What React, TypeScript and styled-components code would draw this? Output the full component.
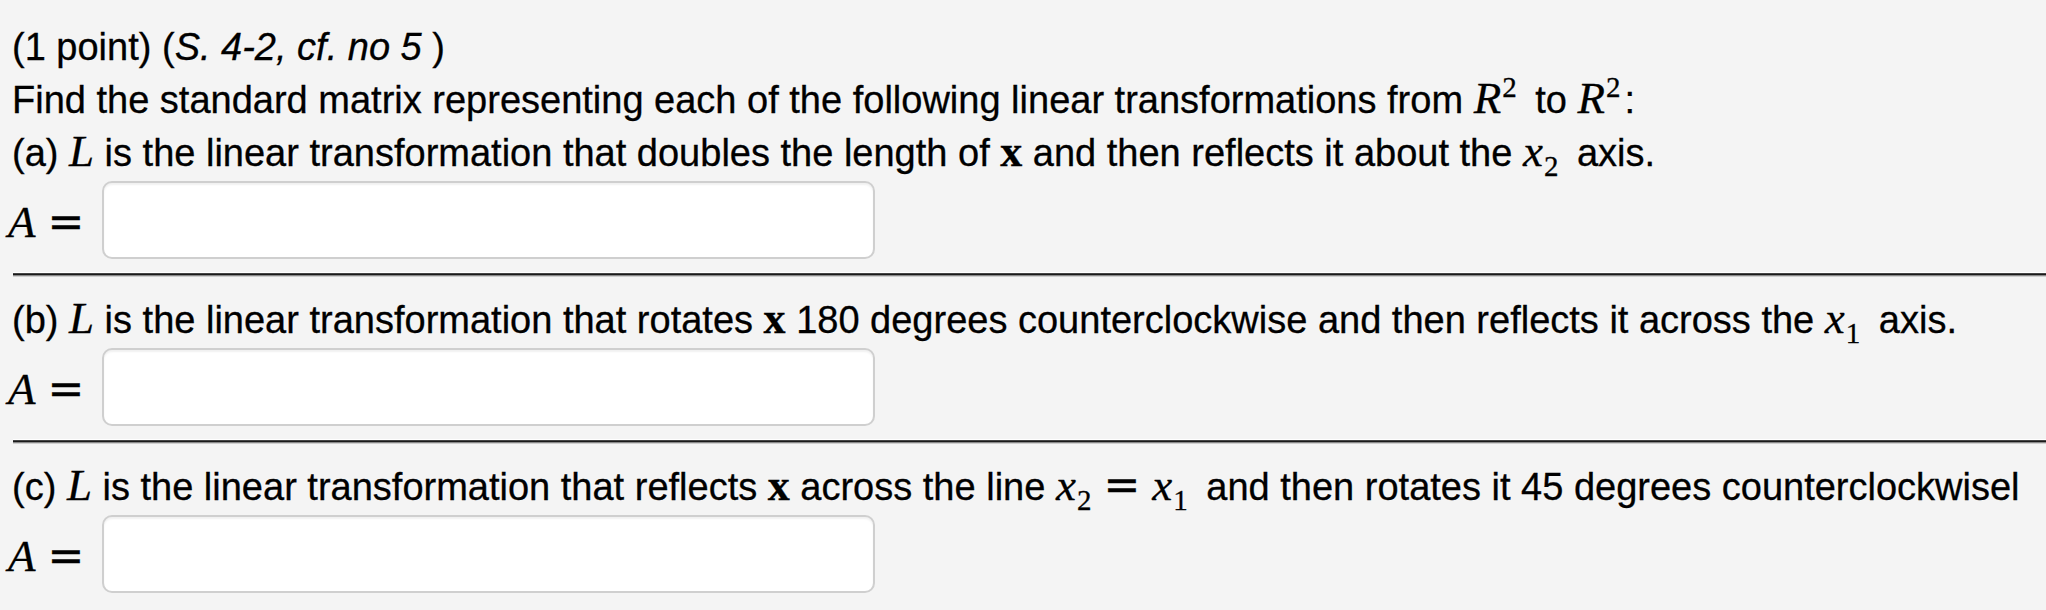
import styled, { createGlobalStyle } from 'styled-components'

const GlobalStyle = createGlobalStyle`
  html, body {
    margin: 0;
    padding: 0;
    background-color: #f4f4f4;
  }
`

const Page = styled.main`
  padding: 21px 0 10px 12px;
  font-family: "Liberation Sans", Arial, Helvetica, sans-serif;
  font-size: 38px;
  line-height: 53px;
  color: #000;
  background-color: #f4f4f4;
  -webkit-text-stroke: 0.3px #000;
`

const Line = styled.p`
  margin: 0;
  white-space: nowrap;
`

const Source = styled.span`
  font-style: italic;
`

const Math = styled.span<{ $trail?: number }>`
  font-family: "Liberation Serif", "Times New Roman", serif;
  font-style: italic;
  font-size: 45px;
  line-height: 1;
  margin-right: ${(p) => p.$trail ?? 0}px;
`

const BoldVec = styled.span`
  font-family: "Liberation Serif", "Times New Roman", serif;
  font-weight: bold;
  font-size: 44px;
  line-height: 1;
`

const Script = styled.span<{ $shift: number }>`
  font-family: "Liberation Serif", "Times New Roman", serif;
  font-style: normal;
  font-size: 29px;
  line-height: 1;
  position: relative;
  top: ${(p) => p.$shift}px;
  margin-left: 1px;
`

const Equals = styled.span`
  font-family: "DejaVu Serif", serif;
  font-style: normal;
  font-size: 44px;
  line-height: 1;
  margin: 0 12px;
`

const AnswerRow = styled.div`
  display: flex;
  align-items: center;
  margin-top: 1px;
`

const Label = styled.label`
  display: flex;
  align-items: center;
  width: 94px;
  margin-left: -4px;
  padding-top: 4px;
  flex-shrink: 0;
`

const AnswerInput = styled.input`
  box-sizing: border-box;
  width: 773px;
  height: 78px;
  margin: 0;
  padding: 8px 14px;
  border: 2px solid #cfcfcf;
  border-radius: 10px;
  background-color: #fff;
  box-shadow: inset 0 2px 2px rgba(0, 0, 0, 0.06);
  font-family: "Liberation Sans", Arial, sans-serif;
  font-size: 32px;
  outline: none;
  appearance: none;
`

const Rule = styled.hr`
  height: 3px;
  margin: 14px 0 18px 1px;
  border: 0;
  background: linear-gradient(#444 0 33%, #1a1a1a 33% 66%, #888 66%);
  box-shadow: 0 -1px 0 #fff, 0 1px 0 #cfcfcf;
`

function Vec() {
  return <BoldVec>x</BoldVec>
}

function Sub({ n, trail }: { n: string; trail?: number }) {
  return (
    <Math $trail={trail}>
      x<Script $shift={10}>{n}</Script>
    </Math>
  )
}

function Answer({ id }: { id: string }) {
  return (
    <AnswerRow>
      <Label htmlFor={id}>
        <Math>A</Math>
        <Equals>=</Equals>
      </Label>
      <AnswerInput id={id} type="text" />
    </AnswerRow>
  )
}

export default function App() {
  return (
    <>
      <GlobalStyle />
      <Page>
        <Line>
          (1 point) (<Source>S. 4-2, cf. no 5</Source> )
        </Line>
        <Line>
          Find the standard matrix representing each of the following linear transformations from{' '}
          <Math $trail={8}>
            R<Script $shift={-16}>2</Script>
          </Math>{' '}
          to{' '}
          <Math $trail={4}>
            R<Script $shift={-16}>2</Script>
          </Math>
          :
        </Line>
        <Line>
          (a) <Math>L</Math> is the linear transformation that doubles the length of <Vec /> and then
          reflects it about the <Sub n="2" trail={8} /> axis.
        </Line>
        <Answer id="ans-a" />

        <Rule />

        <Line>
          (b) <Math>L</Math> is the linear transformation that rotates <Vec /> 180 degrees
          counterclockwise and then reflects it across the <Sub n="1" trail={8} /> axis.
        </Line>
        <Answer id="ans-b" />

        <Rule />

        <Line>
          (c) <Math>L</Math> is the linear transformation that reflects <Vec /> across the line{' '}
          <Sub n="2" />
          <Equals>=</Equals>
          <Sub n="1" trail={8} /> and then rotates it 45 degrees counterclockwisel
        </Line>
        <Answer id="ans-c" />
      </Page>
    </>
  )
}
